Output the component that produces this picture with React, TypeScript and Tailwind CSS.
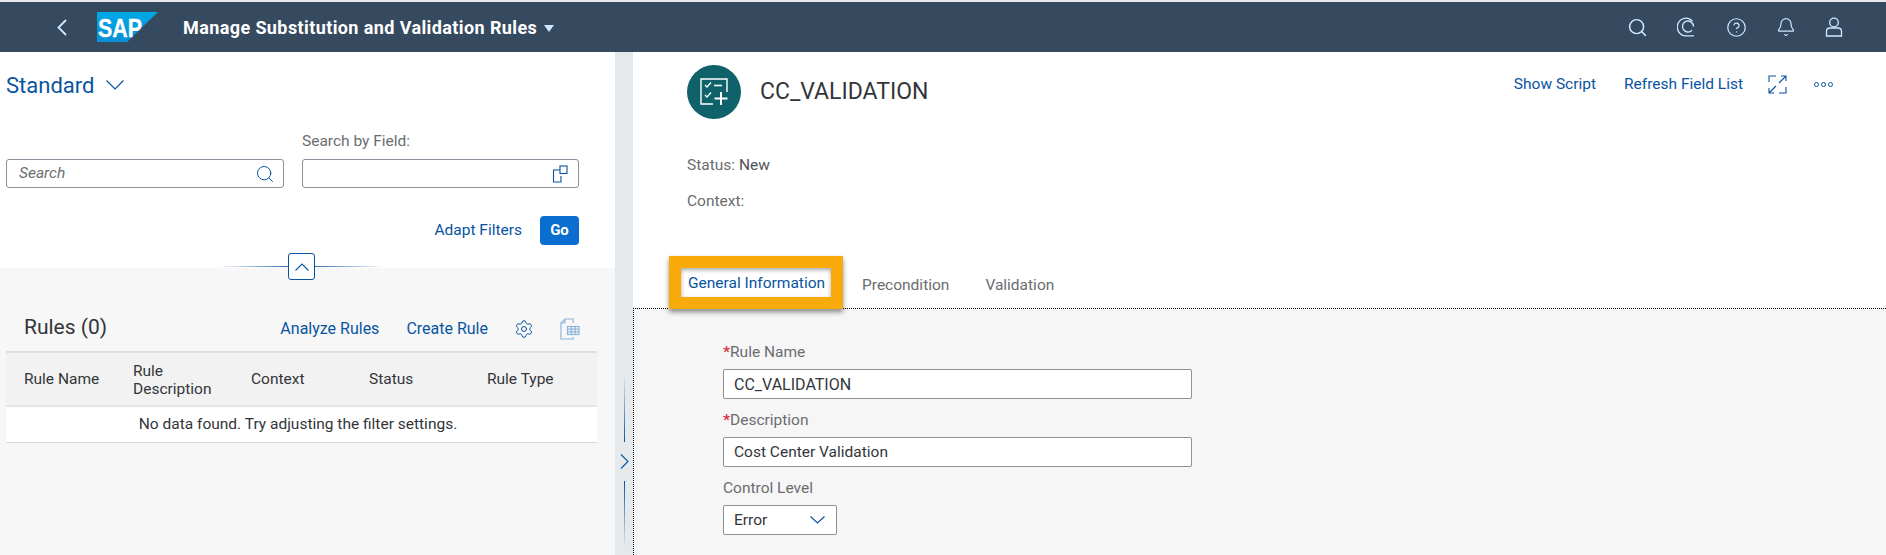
import React from 'react';
import { Search, CircleHelp, Bell, Settings } from 'lucide-react';

const font = { fontFamily: 'Roboto, sans-serif' };

const SapLogo = () => (
  <svg width="61" height="30" viewBox="0 0 61 30">
    <defs>
      <linearGradient id="sap" x1="0" y1="0" x2="0" y2="1">
        <stop offset="0" stopColor="#00a9e6" />
        <stop offset="1" stopColor="#0a8fd6" />
      </linearGradient>
    </defs>
    <polygon points="0,0 61,0 30,30 0,30" fill="url(#sap)" />
    <text x="1" y="25" fill="#fff" stroke="#fff" strokeWidth="0.3" fontSize="26" fontWeight="800" textLength="44" lengthAdjust="spacingAndGlyphs" fontFamily='"Liberation Sans", sans-serif'>
      SAP
    </text>
  </svg>
);

const ChevronDownIcon = ({ w, h, color = '#0854a0' }: { w: number; h: number; color?: string }) => (
  <svg width={w} height={h} viewBox={`0 0 ${w} ${h}`} fill="none" stroke={color} strokeWidth="1.2">
    <path d={`M0.5 0.5L${w / 2} ${h - 1}L${w - 0.5} 0.5`} />
  </svg>
);

const CopilotIcon = () => (
  <svg width="20" height="20" viewBox="0 0 20 20" fill="none" stroke="#d1e8ff" strokeWidth="1.3">
    <path d="M15.5 4A8.8 8.8 0 1 0 9 18.8H17" />
    <path d="M15 13.3A5.5 5.5 0 1 1 16.5 9.5" />
  </svg>
);

const UserIcon = () => (
  <svg width="18" height="20" viewBox="0 0 18 20" fill="none" stroke="#d1e8ff" strokeWidth="1.3">
    <circle cx="9" cy="5.5" r="4.3" />
    <path d="M1.5 19V14.5C1.5 12.5 3 11 5 11H13C15 11 16.5 12.5 16.5 14.5V19Z" />
  </svg>
);

const CopyIcon = () => (
  <svg width="16" height="18" viewBox="0 0 16 18" fill="none" stroke="#0854a0" strokeWidth="1.1">
    <rect x="8" y="1" width="7" height="7.5" />
    <path d="M8 5H1.5V17H9V11" />
  </svg>
);

const TableIcon = () => (
  <svg width="20" height="22" viewBox="0 0 20 22" fill="none" stroke="#8fb4d9" strokeWidth="1.2">
    <path d="M13 5V1H5L1 5V21H13V19" />
    <path d="M5 1V5H1" />
    <rect x="7.5" y="8.5" width="11.5" height="8" fill="#f7f7f7" />
    <path d="M7.5 11.2H19M7.5 13.9H19M11.3 8.5V16.5M15.2 8.5V16.5" />
  </svg>
);

const ExpandIcon = () => (
  <svg width="19" height="19" viewBox="0 0 19 19" fill="none" stroke="#0854a0" strokeWidth="1.1">
    <path d="M1 7V1H8M18 12V18H11" />
    <path d="M11 8L18 1M13 1H18V6M8 11L1 18M1 13V18H6" />
  </svg>
);

const RuleIcon = () => (
  <svg width="28" height="28" viewBox="0 0 28 28" fill="none" stroke="#fff" strokeWidth="1.4">
    <path d="M27 14V1H1V26H13" />
    <path d="M5 7L7 9L11 4.5M5 17L7 19L11 14.5" strokeWidth="1.3" />
    <path d="M14 7.5H22" strokeWidth="1.6" />
    <path d="M21 14V27M14.5 20.5H27.5" strokeWidth="2" />
  </svg>
);

const FieldLabel = ({ text, required }: { text: string; required?: boolean }) => (
  <div className="text-[15.5px] leading-5 text-[#6a6d70]">
    {required && <span className="font-bold text-[#d9363e]">*</span>}
    {text}
  </div>
);

const columns = [
  { label: 'Rule Name', width: 'w-[127px] pl-[18px]' },
  { label: 'Rule Description', width: 'w-[118px] pr-[30px] leading-[18px]' },
  { label: 'Context', width: 'w-[118px]' },
  { label: 'Status', width: 'w-[118px]' },
  { label: 'Rule Type', width: 'w-[110px]' },
];

const App = () => {
  return (
    <div className="flex h-[555px] w-[1886px] flex-col overflow-hidden bg-white" style={font}>
      <div className="h-[2px] bg-[#e8e8e8]" />
      <header className="flex h-[50px] items-center bg-[#354a5f] text-white">
        <svg className="ml-[57px]" width="10" height="17" viewBox="0 0 10 17" fill="none" stroke="#d1e8ff" strokeWidth="1.8">
          <path d="M9 1L1.5 8.5L9 16" />
        </svg>
        <div className="ml-[30px] flex">
          <SapLogo />
        </div>
        <h1 className="ml-[25px] text-[18px] font-bold tracking-[0.4px]">Manage Substitution and Validation Rules</h1>
        <span className="ml-[7px] mt-[2px] h-0 w-0 border-x-[5px] border-t-[7px] border-x-transparent border-t-[#d1e8ff]" />
        <div className="ml-auto mr-[43px] flex items-center gap-[29px] text-[#d1e8ff]">
          <Search size={21} strokeWidth={1.7} />
          <CopilotIcon />
          <CircleHelp size={21} strokeWidth={1.4} />
          <Bell size={20} strokeWidth={1.4} />
          <UserIcon />
        </div>
      </header>

      <div className="flex min-h-0 flex-1">
        <aside className="flex w-[615px] flex-col bg-[#f7f7f7]">
          <section className="relative h-[216px] bg-white px-[6px] pt-[18px]">
            <div className="flex h-[30px] items-center gap-[12px] text-[22px] text-[#0854a0]">
              Standard
              <ChevronDownIcon w={18} h={10} />
            </div>
            <div className="mt-[31px] flex gap-[18px]">
              <div className="w-[278px] self-end">
                <div className="flex h-[29px] items-center justify-between rounded-[3px] border border-[#89919a] bg-white pl-3 pr-[8px]">
                  <span className="text-[15.5px] italic text-[#6a6d70]">Search</span>
                  <Search size={20} strokeWidth={1.2} className="text-[#0854a0]" />
                </div>
              </div>
              <div className="w-[277px]">
                <div className="mb-2 text-[15.5px] leading-5 text-[#6a6d70]">Search by Field:</div>
                <div className="flex h-[29px] items-center justify-end rounded-[3px] border border-[#89919a] bg-white pr-[10px]">
                  <CopyIcon />
                </div>
              </div>
            </div>
            <div className="mt-[28px] flex w-[573px] items-center justify-end gap-[18px]">
              <span className="text-[15.5px] text-[#0854a0]">Adapt Filters</span>
              <span className="flex h-[29px] w-[39px] items-center justify-center rounded-[4px] bg-[#0a6ed1] text-[15px] font-bold text-white">
                Go
              </span>
            </div>
            <div className="absolute left-[218px] top-[214px] h-px w-[167px] bg-gradient-to-r from-transparent via-[#0854a0] to-transparent" />
            <div className="absolute left-[288px] top-[201px] flex h-[27px] w-[27px] items-center justify-center rounded-[3px] border border-[#0854a0] bg-white">
              <svg width="14" height="8" viewBox="0 0 14 8" fill="none" stroke="#0854a0" strokeWidth="1.1">
                <path d="M0.5 7.5L7 1L13.5 7.5" />
              </svg>
            </div>
          </section>

          <section className="pt-[45px]">
            <div className="flex h-[30px] items-center pl-[24px] pr-[35px]">
              <h2 className="text-[21px] text-[#32363a]">Rules (0)</h2>
              <div className="ml-auto flex items-center pt-px text-[16px] text-[#0854a0]">
                <span>Analyze Rules</span>
                <span className="ml-[27px]">Create Rule</span>
                <Settings className="ml-[26px]" size={20} strokeWidth={1.2} />
                <span className="ml-[26px] flex">
                  <TableIcon />
                </span>
              </div>
            </div>
            <div className="ml-[6px] mt-[8px] w-[591px]">
              <div className="flex h-[56px] items-center border-y-2 border-t-[#dfdfdf] border-b-[#e5e5e5] bg-[#f2f2f2] pt-px text-[15.5px] text-[#32363a]">
                {columns.map((c) => (
                  <div key={c.label} className={c.width}>
                    {c.label}
                  </div>
                ))}
              </div>
              <div className="flex h-[36px] items-center justify-center border-b border-[#d9d9d9] bg-white pr-[7px] pt-px text-[15.5px] text-[#32363a]">
                No data found. Try adjusting the filter settings.
              </div>
            </div>
          </section>
        </aside>

        <div className="flex w-[18px] flex-col items-center bg-[#e6e9eb]">
          <div className="mt-[323px] h-[67px] w-px bg-gradient-to-b from-transparent to-[#0854a0]" />
          <svg className="my-[12px]" width="9" height="15" viewBox="0 0 9 15" fill="none" stroke="#0854a0" strokeWidth="1.1">
            <path d="M1 0.5L8 7.5L1 14.5" />
          </svg>
          <div className="h-[67px] w-px bg-gradient-to-t from-transparent to-[#0854a0]" />
        </div>

        <main className="flex min-w-0 flex-1 flex-col">
          <div className="relative h-[204px] pl-[54px] pt-[13px]">
            <div className="flex items-center">
              <div className="flex h-[54px] w-[54px] items-center justify-center rounded-full bg-[#0f626a]">
                <RuleIcon />
              </div>
              <div className="ml-[19px] text-[23px] text-[#32363a]">CC_VALIDATION</div>
              <div className="ml-auto mr-[53px] flex items-center self-start pt-[8px] text-[15.5px] text-[#0854a0]">
                <span>Show Script</span>
                <span className="ml-[28px]">Refresh Field List</span>
                <span className="ml-[25px] flex">
                  <ExpandIcon />
                </span>
                <span className="ml-[27px] flex gap-[2px]">
                  <i className="h-[5px] w-[5px] rounded-full border border-[#0854a0]" />
                  <i className="h-[5px] w-[5px] rounded-full border border-[#0854a0]" />
                  <i className="h-[5px] w-[5px] rounded-full border border-[#0854a0]" />
                </span>
              </div>
            </div>
            <div className="mt-[36px] text-[15.5px] leading-5 text-[#6a6d70]">
              Status: <span className="text-[#4e5256]">New</span>
            </div>
            <div className="mt-[16px] text-[15.5px] leading-5 text-[#6a6d70]">Context:</div>
          </div>

          <nav className="relative z-10 -mb-px flex h-[53px] pl-[36px] text-[15.5px] text-[#6a6d70]">
            <div className="flex h-[53px] w-[174px] items-center whitespace-nowrap border-[12px] border-[#f9ab0b] bg-white pl-[7px] pt-[3px] text-[#0854a0] shadow-[0_3px_5px_rgba(0,0,0,0.45),inset_0_2px_4px_rgba(0,0,0,0.35)]">
              General Information
            </div>
            <span className="ml-[19px] pt-[18px]">Precondition</span>
            <span className="ml-[36px] pt-[18px]">Validation</span>
          </nav>

          <section className="min-h-0 flex-1 border-l border-t border-dotted border-black bg-[#f6f6f7] pl-[89px] pt-[33px]">
            <FieldLabel text="Rule Name" required />
            <div className="mt-[7px] flex h-[30px] w-[469px] items-center rounded-[2px] border border-[#89919a] bg-white pl-[10px] pt-[2px] text-[16px] text-[#32363a]">
              CC_VALIDATION
            </div>
            <div className="mt-[11px]">
              <FieldLabel text="Description" required />
            </div>
            <div className="mt-[7px] flex h-[30px] w-[469px] items-center rounded-[2px] border border-[#89919a] bg-white pl-[10px] pt-[2px] text-[15.5px] text-[#32363a]">
              Cost Center Validation
            </div>
            <div className="mt-[11px]">
              <FieldLabel text="Control Level" />
            </div>
            <div className="mt-[7px] flex h-[30px] w-[114px] items-center justify-between rounded-[2px] border border-[#89919a] bg-white pl-[10px] pr-[11px] text-[15.5px] text-[#32363a]">
              <span className="pt-[2px]">Error</span>
              <ChevronDownIcon w={15} h={8} />
            </div>
          </section>
        </main>
      </div>
    </div>
  );
};

export default App;
